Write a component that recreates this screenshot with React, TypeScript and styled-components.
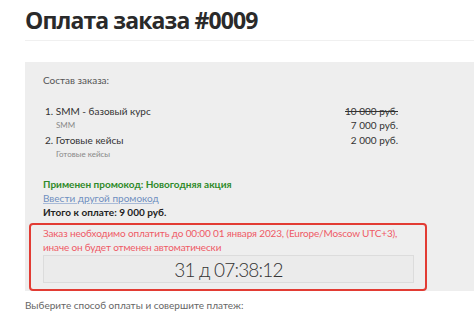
import styled, { createGlobalStyle } from "styled-components";

const GlobalStyle = createGlobalStyle`
  body {
    margin: 0;
    background: #fff;
    font-family: Lato, "Open Sans", sans-serif;
    color: #333;
  }
`;

const StyledPage = styled.div`
  padding-left: 25px;
  width: 449px;
`;

const StyledHeader = styled.header`
  padding: 5px 0 5px;
  border-bottom: 1px solid #f0f0f0;
`;

const StyledTitle = styled.h1`
  margin: 0;
  font-family: "Open Sans", sans-serif;
  font-size: 23px;
  line-height: 30px;
  font-weight: 700;
  letter-spacing: -0.9px;
  color: #2a2a2a;
`;

const StyledPanel = styled.section`
  margin-top: 21px;
  padding: 10px 0 0 18px;
  background: #eeeeee;
`;

const StyledLabel = styled.div`
  font-size: 10px;
  line-height: 16px;
  color: #555;
`;

const StyledList = styled.ol`
  margin: 16px 0 0;
  padding: 0;
  list-style: none;
  width: 355px;
  display: flex;
  flex-direction: column;
  gap: 2px;
`;

const StyledItem = styled.li`
  display: grid;
  grid-template-columns: 1fr auto;
  margin-left: 2px;
`;

const StyledName = styled.div`
  font-size: 10px;
  line-height: 15px;
  color: #333;
`;

const StyledSub = styled.div`
  padding-left: 11px;
  font-size: 8px;
  line-height: 12px;
  color: #888;
`;

const StyledPrices = styled.div`
  text-align: right;
  font-size: 10px;
  color: #333;
`;

const StyledPrice = styled.div<{ $old?: boolean; $tall?: boolean }>`
  line-height: ${(p) => (p.$tall ? "15px" : "12px")};
  text-decoration: ${(p) => (p.$old ? "line-through" : "none")};
`;

const StyledPromo = styled.div`
  margin-top: 17px;
  font-size: 10px;
  line-height: 14px;
`;

const StyledApplied = styled.div`
  color: #2f8a2a;
  font-weight: 700;
`;

const StyledLink = styled.a`
  display: inline-block;
  color: #6f8fc0;
  text-decoration: underline;
  text-decoration-color: #a9bbd8;
`;

const StyledTotal = styled.div`
  color: #222;
  font-weight: 700;
`;

const StyledDeadline = styled.div`
  margin: 4px 0 0 -14px;
  width: 371px;
  padding: 1px 11px 6px 12px;
  border: 2px solid #e23b33;
  border-radius: 4px;
`;

const StyledWarning = styled.div`
  font-size: 10px;
  line-height: 14px;
  letter-spacing: -0.15px;
  white-space: nowrap;
  color: #ee5a66;
`;

const StyledTimer = styled.div`
  margin-top: 1px;
  height: 26px;
  border: 1px solid #dcdcdc;
  background: #ebebeb;
  display: flex;
  align-items: center;
  justify-content: center;
  font-size: 19px;
  font-weight: 300;
  letter-spacing: -0.8px;
  color: #333;
`;

const StyledHint = styled.p`
  margin: 7px 0 0;
  font-size: 10px;
  line-height: 14px;
  color: #666;
`;

const items = [
  { id: 1, name: "SMM - базовый курс", sub: "SMM", oldPrice: "10 000 руб.", price: "7 000 руб." },
  { id: 2, name: "Готовые кейсы", sub: "Готовые кейсы", price: "2 000 руб." }
];

export default function App() {
  return (
    <StyledPage>
      <GlobalStyle />
      <StyledHeader>
        <StyledTitle>Оплата заказа #0009</StyledTitle>
      </StyledHeader>
      <StyledPanel>
        <StyledLabel>Состав заказа:</StyledLabel>
        <StyledList>
          {items.map((item, idx) => (
            <StyledItem key={item.id}>
              <div>
                <StyledName>
                  {idx + 1}. {item.name}
                </StyledName>
                <StyledSub>{item.sub}</StyledSub>
              </div>
              <StyledPrices>
                {item.oldPrice && (
                  <StyledPrice $old $tall>
                    {item.oldPrice}
                  </StyledPrice>
                )}
                <StyledPrice $tall={!item.oldPrice}>{item.price}</StyledPrice>
              </StyledPrices>
            </StyledItem>
          ))}
        </StyledList>
        <StyledPromo>
          <StyledApplied>Применен промокод: Новогодняя акция</StyledApplied>
          <StyledLink href="#">Ввести другой промокод</StyledLink>
          <StyledTotal>Итого к оплате: 9 000 руб.</StyledTotal>
        </StyledPromo>
        <StyledDeadline>
          <StyledWarning>
            Заказ необходимо оплатить до 00:00 01 января 2023, (Europe/Moscow UTC+3),
            <br />
            иначе он будет отменен автоматически
          </StyledWarning>
          <StyledTimer>31 д 07:38:12</StyledTimer>
        </StyledDeadline>
      </StyledPanel>
      <StyledHint>Выберите способ оплаты и совершите платеж:</StyledHint>
    </StyledPage>
  );
}
